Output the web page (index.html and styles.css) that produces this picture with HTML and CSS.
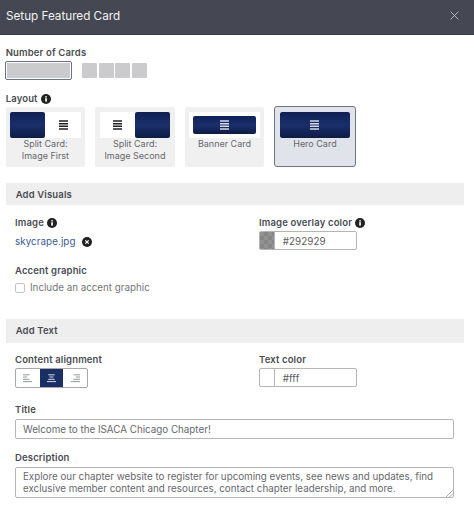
FILE: index.html
```html
<!DOCTYPE html>
<html lang="en">
<head>
<meta charset="utf-8">
<title>Setup Featured Card</title>
<link rel="stylesheet" href="styles.css">
</head>
<body>
<svg class="defs" width="0" height="0" aria-hidden="true">
  <symbol id="info" viewBox="0 0 10 10"><circle cx="5" cy="5" r="5" fill="#222"/><rect x="4.2" y="4.2" width="1.7" height="3.4" fill="#fff"/><rect x="4.2" y="2.2" width="1.7" height="1.3" fill="#fff"/></symbol>
  <symbol id="lines" viewBox="0 0 9 10"><path d="M0 1h9M0 3.7h9M0 6.3h9M0 9h9" stroke="currentColor" stroke-width="1.4"/></symbol>
</svg>
<header class="top">
  <h1>Setup Featured Card</h1>
  <svg class="close" viewBox="0 0 10 10" aria-label="Close"><path d="M.7.7l8.6 8.6M9.3.7L.7 9.3" stroke="#b9bcc4" stroke-width="1"/></svg>
</header>
<main class="body">
  <div class="lbl num">Number of Cards</div>
  <div class="counts">
    <span class="count-sel"><i></i></span>
    <span class="counts-rest"><i></i><i></i><i></i><i></i></span>
  </div>
  <div class="lbl layout-lbl">Layout <svg class="info"><use href="#info"/></svg></div>
  <div class="cards">
    <div class="card">
      <div class="thumb split"><span class="img"></span><span class="txt"><svg class="ln"><use href="#lines"/></svg></span></div>
      <p>Split Card:<br>Image First</p>
    </div>
    <div class="card">
      <div class="thumb split"><span class="txt"><svg class="ln"><use href="#lines"/></svg></span><span class="img"></span></div>
      <p>Split Card:<br>Image Second</p>
    </div>
    <div class="card">
      <div class="thumb banner"><span class="img center"><svg class="ln lt"><use href="#lines"/></svg></span></div>
      <p>Banner Card</p>
    </div>
    <div class="card active">
      <div class="thumb"><span class="img center"><svg class="ln lt"><use href="#lines"/></svg></span></div>
      <p>Hero Card</p>
    </div>
  </div>

  <h2 class="bar visuals">Add Visuals</h2>
  <div class="cols row-image">
    <div>
      <div class="lbl">Image <svg class="info"><use href="#info"/></svg></div>
      <div class="file"><a href="#">skycrape.jpg</a>
        <svg class="x" viewBox="0 0 10 10"><circle cx="5" cy="5" r="5" fill="#222"/><path d="M3.3 3.3l3.4 3.4M6.7 3.3L3.3 6.7" stroke="#fff" stroke-width="1.2"/></svg>
      </div>
    </div>
    <div>
      <div class="lbl">Image overlay color <svg class="info"><use href="#info"/></svg></div>
      <div class="color"><span class="swatch dark"></span><span class="val">#292929</span></div>
    </div>
  </div>
  <div class="indent accent">
    <div class="lbl">Accent graphic</div>
    <label class="check"><span class="box"></span>Include an accent graphic</label>
  </div>

  <h2 class="bar addtext">Add Text</h2>
  <div class="cols row-align">
    <div>
      <div class="lbl">Content alignment</div>
      <div class="align">
        <span><svg viewBox="0 0 11 10"><path d="M0 .5h8M0 3.2h5M0 6h8M0 8.8h11" stroke="#7d7f85"/></svg></span>
        <span class="on"><svg viewBox="0 0 11 10"><path d="M1.5.5h8M3 3.2h5M1.5 6h8M0 8.8h11" stroke="#fff"/></svg></span>
        <span><svg viewBox="0 0 11 10"><path d="M3 .5h8M6 3.2h5M3 6h8M0 8.8h11" stroke="#7d7f85"/></svg></span>
      </div>
    </div>
    <div>
      <div class="lbl">Text color</div>
      <div class="color"><span class="swatch"></span><span class="val">#fff</span></div>
    </div>
  </div>
  <div class="indent title-f">
    <div class="lbl">Title</div>
    <div class="field">Welcome to the ISACA Chicago Chapter!</div>
  </div>
  <div class="indent desc-f">
    <div class="lbl">Description</div>
    <div class="field area">Explore our chapter website to register for upcoming events, see news and updates, find<br>exclusive member content and resources, contact chapter leadership, and more.
      <svg class="grip" viewBox="0 0 7 7"><path d="M0 7L7 0M3.5 7L7 3.5" stroke="#999" stroke-width=".8"/></svg>
    </div>
  </div>
</main>
</body>
</html>
```
FILE: styles.css
```css
* { box-sizing: border-box; }
html, body { margin: 0; padding: 0; }
body {
  width: 474px; height: 508px; overflow: hidden; background: #fff;
  font-family: Inter, "Liberation Sans", sans-serif; font-size: 9.8px; color: #555;
}
.defs { position: absolute; }
.top {
  height: 34.5px; background: #454852; border-bottom: 1px solid #3a3d46;
  display: flex; align-items: center; justify-content: space-between;
  padding: 0 15px 2px 6px;
}
.top h1 { margin: 0; font-size: 11.7px; font-weight: 400; color: #f1f1f3; }
.close { width: 9px; height: 9px; }
.body { padding: 11.5px 10.5px 0 5.7px; }
.lbl { height: 13px; margin-bottom: -1px; padding-top: 1px; font-size: 9.5px; font-weight: 600; color: #4a4c52; line-height: 12px; letter-spacing: .15px; display: flex; align-items: center; gap: 3px; }
.info { flex: none; width: 10px; height: 10px; }
.counts { display: flex; align-items: center; margin: 3px 0 0 -.7px; gap: 10.3px; }
.count-sel { width: 67px; height: 18.5px; border: 1px solid #6a7190; border-radius: 2px; padding: 1px; display: block; }
.count-sel i { display: block; height: 100%; background: #cbcbcd; }
.counts-rest { display: flex; gap: 1.7px; }
.counts-rest i { width: 14.8px; height: 14.6px; background: #cbcbcd; border-radius: 1px; }
.layout-lbl { margin-top: 12.5px; }
.cards { display: flex; align-items: flex-start; gap: 10px; margin-top: 3px; height: 59.5px; }
.card {
  width: 79.5px; height: 59.5px; background: #f0f0f1; border-radius: 2px; padding: 5px 4.5px 0;
}
.card.active { width: 81.5px; height: 61px; margin: -.6px 0 0; background: #e0e3ea; border: 1px solid #6e7488; border-radius: 3px; padding: 4.6px 4.7px 0; }
.card p { margin: 0; text-align: center; font-size: 9px; line-height: 11.7px; color: #66686d; }
.thumb { height: 26px; display: flex; background: #fff; }
.img { flex: 1; border-radius: 2px; background: linear-gradient(180deg, #0f2154 0%, #1a2f6b 50%, #0e1b45 100%); }
.center { display: flex; align-items: center; justify-content: center; color: #d8dce6; }
.txt { flex: 1; display: flex; align-items: center; justify-content: center; color: #222; }
.ln { width: 9px; height: 10px; }
.lt { color: #d5d9e4; }
.banner { padding: 4px; }
.bar {
  margin: 16px 0 0; height: 22.3px; background: #eeeeee; padding-left: 10px;
  font-size: 9.5px; font-weight: 600; color: #4a4c52; line-height: 23px; letter-spacing: .15px;
}
.addtext { height: 23.7px; line-height: 24px; margin-top: 24.2px; }
.cols { display: grid; grid-template-columns: 244px 1fr; padding-left: 9.3px; }
.row-image { margin-top: 11.2px; }
.file { height: 19px; margin-top: 4.5px; display: flex; align-items: center; gap: 6px; }
.file a { color: #3d5a94; text-decoration: none; font-size: 9.8px; letter-spacing: .08px; }
.x { width: 10px; height: 10px; }
.color { width: 98px; height: 19px; margin-top: 3.5px; border: 1px solid #b5b5b8; border-radius: 2px; display: flex; align-items: center; }
.swatch { width: 14.7px; height: 100%; border-right: 1px solid #b5b5b8; }
.swatch.dark {
  background: repeating-conic-gradient(#868686 0 25%, #929292 0 50%) 0 0 / 8px 8px;
}
.val { padding: 1px 0 0 8px; font-size: 9.8px; letter-spacing: .1px; color: #5c5c5c; }
.indent { padding-left: 9.3px; }
.accent { margin-top: 13px; }
.check { display: flex; align-items: center; gap: 5px; margin-top: 4.4px; font-size: 9.8px; color: #73757a; line-height: 14px; }
.box { width: 10px; height: 10px; border: 1px solid #c4c4c6; border-radius: 2px; }
.row-align { margin-top: 10px; }
.align { display: flex; width: 73px; height: 20px; margin-top: 3.5px; border: 1px solid #a9a9ac; border-radius: 2px; overflow: hidden; }
.align span { flex: 1; display: flex; align-items: center; justify-content: center; }
.align span.on { background: #1a2f66; }
.align svg { width: 9px; height: 9px; }
.title-f { margin-top: 15px; }
.field {
  position: relative; margin-top: 3.7px; height: 19.7px; width: 438.7px; border: 1px solid #b5b5b8; border-radius: 2px;
  padding: 0 7px; font-size: 9.8px; line-height: 19px; color: #66686c;
}
.desc-f { margin-top: 12.6px; }
.area { height: 31px; padding-top: 3.5px; line-height: 11.7px; white-space: nowrap; }
.grip { position: absolute; right: 0; bottom: 0; width: 7px; height: 7px; }
```
